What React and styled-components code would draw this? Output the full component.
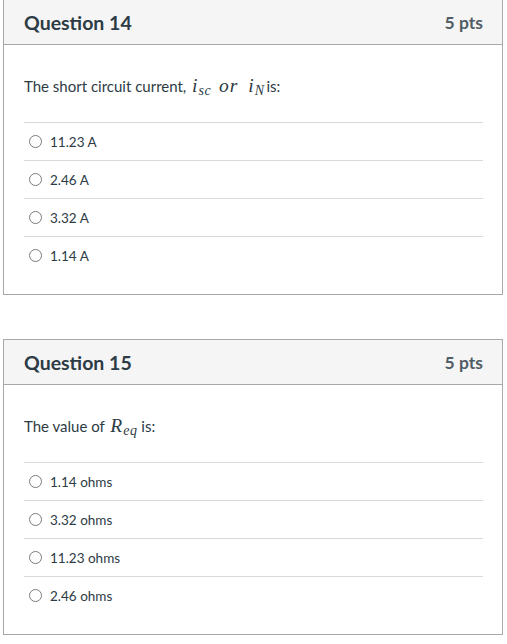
import React from 'react'
import styled, { createGlobalStyle } from 'styled-components'

const GlobalStyle = createGlobalStyle`
  html, body {
    margin: 0;
    padding: 0;
    background: #ffffff;
  }
  body {
    font-family: Lato, "Liberation Sans", sans-serif;
    color: #2d3b45;
  }
`

const Page = styled.div`
  display: flex;
  flex-direction: column;
  gap: 44px;
  padding: 0 4px 0 3px;
  margin-top: -1px;
`
const Card = styled.div`
  border: 1px solid #a6a8aa;
  background: #ffffff;
`
const Header = styled.div`
  display: flex;
  align-items: center;
  justify-content: space-between;
  height: 44px;
  padding: 0 19px 0 20px;
  background: #f5f5f5;
  border-bottom: 1px solid #a6a8aa;
`
const Title = styled.h2`
  margin: 0;
  font-size: 19.5px;
  font-weight: 700;
  color: #2d3b45;
`
const Points = styled.span`
  font-size: 17.5px;
  font-weight: 700;
  color: #515d66;
`
const Body = styled.div`
  padding: 30px 19px 20px 20px;
`
const Prompt = styled.p`
  margin: 0 0 25px;
  font-size: 15px;
  line-height: 22px;
  height: 22px;
  white-space: nowrap;
`
const MathVar = styled.span`
  font-family: "Liberation Serif", "DejaVu Serif", serif;
  font-style: italic;
  font-size: 19.5px;
  margin: 0 ${p => p.$space || 1}px 0 ${p => p.$space || 2}px;
  letter-spacing: ${p => (p.$space ? '1px' : '0')};
`
const Sub = styled.sub`
  font-family: "Liberation Serif", "DejaVu Serif", serif;
  font-style: italic;
  font-size: 14px;
  vertical-align: -3px;
  line-height: 0;
  margin-right: ${p => p.$after || 0}px;
  letter-spacing: 0.5px;
`
const AnswerList = styled.div`
  display: flex;
  flex-direction: column;
`
const Answer = styled.label`
  display: flex;
  align-items: center;
  gap: 8px;
  height: 37px;
  padding-left: 5px;
  border-top: 1px solid #d7dadd;
`
const Radio = styled.span`
  width: 11px;
  height: 11px;
  border: 1px solid #777c80;
  border-radius: 50%;
  background: #ffffff;
  flex: none;
`
const AnswerText = styled.span`
  font-size: 13.5px;
  color: #2d3b45;
`

const questions = [
  {
    id: 14,
    points: 5,
    text: (
      <>
        The short circuit current, <MathVar>i</MathVar>
        <Sub>sc</Sub> <MathVar $space={4}>or</MathVar> <MathVar>i</MathVar>
        <Sub $after={2}>N</Sub>is:
      </>
    ),
    answers: ['11.23 A', '2.46 A', '3.32 A', '1.14 A']
  },
  {
    id: 15,
    points: 5,
    text: (
      <>
        The value of <MathVar>R</MathVar>
        <Sub>eq</Sub> is:
      </>
    ),
    answers: ['1.14 ohms', '3.32 ohms', '11.23 ohms', '2.46 ohms']
  }
]

export default function App() {
  return (
    <>
      <GlobalStyle />
      <Page>
        {questions.map(q => (
          <Card key={q.id}>
            <Header>
              <Title>Question {q.id}</Title>
              <Points>{q.points} pts</Points>
            </Header>
            <Body>
              <Prompt>{q.text}</Prompt>
              <AnswerList>
                {q.answers.map(a => (
                  <Answer key={a}>
                    <Radio />
                    <AnswerText>{a}</AnswerText>
                  </Answer>
                ))}
              </AnswerList>
            </Body>
          </Card>
        ))}
      </Page>
    </>
  )
}
